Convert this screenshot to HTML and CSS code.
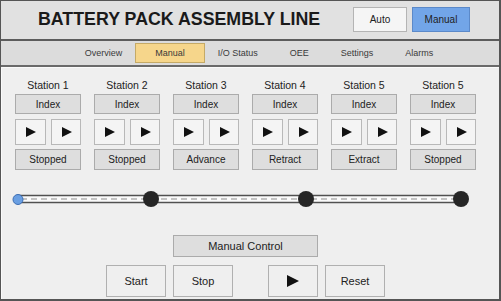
FILE: index.html
```html
<!DOCTYPE html>
<html lang="en">
<head>
    <meta charset="UTF-8">
    <title>Battery Pack Assembly Line</title>
    <link rel="stylesheet" href="styles.css">
</head>
<body>
    <div class="panel">
        <header class="header">
            <h1 class="title">BATTERY PACK ASSEMBLY LINE</h1>
            <div class="mode">
                <button class="mode-btn">Auto</button>
                <button class="mode-btn active">Manual</button>
            </div>
        </header>

        <nav class="tabs">
            <span class="tab">Overview</span>
            <span class="tab active">Manual</span>
            <span class="tab">I/O Status</span>
            <span class="tab">OEE</span>
            <span class="tab">Settings</span>
            <span class="tab">Alarms</span>
        </nav>

        <main class="content">
            <div class="stations">
                <div class="station">
                    <div class="station-name">Station 1</div>
                    <button class="btn index">Index</button>
                    <div class="jog">
                        <button class="btn play"><svg width="10" height="10" viewBox="0 0 10 10"><polygon points="0,0 10,5 0,10" /></svg></button>
                        <button class="btn play"><svg width="10" height="10" viewBox="0 0 10 10"><polygon points="0,0 10,5 0,10" /></svg></button>
                    </div>
                    <button class="btn state">Stopped</button>
                </div>
                <div class="station">
                    <div class="station-name">Station 2</div>
                    <button class="btn index">Index</button>
                    <div class="jog">
                        <button class="btn play"><svg width="10" height="10" viewBox="0 0 10 10"><polygon points="0,0 10,5 0,10" /></svg></button>
                        <button class="btn play"><svg width="10" height="10" viewBox="0 0 10 10"><polygon points="0,0 10,5 0,10" /></svg></button>
                    </div>
                    <button class="btn state">Stopped</button>
                </div>
                <div class="station">
                    <div class="station-name">Station 3</div>
                    <button class="btn index">Index</button>
                    <div class="jog">
                        <button class="btn play"><svg width="10" height="10" viewBox="0 0 10 10"><polygon points="0,0 10,5 0,10" /></svg></button>
                        <button class="btn play"><svg width="10" height="10" viewBox="0 0 10 10"><polygon points="0,0 10,5 0,10" /></svg></button>
                    </div>
                    <button class="btn state">Advance</button>
                </div>
                <div class="station">
                    <div class="station-name">Station 4</div>
                    <button class="btn index">Index</button>
                    <div class="jog">
                        <button class="btn play"><svg width="10" height="10" viewBox="0 0 10 10"><polygon points="0,0 10,5 0,10" /></svg></button>
                        <button class="btn play"><svg width="10" height="10" viewBox="0 0 10 10"><polygon points="0,0 10,5 0,10" /></svg></button>
                    </div>
                    <button class="btn state">Retract</button>
                </div>
                <div class="station">
                    <div class="station-name">Station 5</div>
                    <button class="btn index">Index</button>
                    <div class="jog">
                        <button class="btn play"><svg width="10" height="10" viewBox="0 0 10 10"><polygon points="0,0 10,5 0,10" /></svg></button>
                        <button class="btn play"><svg width="10" height="10" viewBox="0 0 10 10"><polygon points="0,0 10,5 0,10" /></svg></button>
                    </div>
                    <button class="btn state">Extract</button>
                </div>
                <div class="station">
                    <div class="station-name">Station 5</div>
                    <button class="btn index">Index</button>
                    <div class="jog">
                        <button class="btn play"><svg width="10" height="10" viewBox="0 0 10 10"><polygon points="0,0 10,5 0,10" /></svg></button>
                        <button class="btn play"><svg width="10" height="10" viewBox="0 0 10 10"><polygon points="0,0 10,5 0,10" /></svg></button>
                    </div>
                    <button class="btn state">Stopped</button>
                </div>
            </div>

            <!-- conveyor position track -->
            <svg class="track" width="499" height="20" viewBox="0 0 499 20">
                <rect x="17" y="6.5" width="443" height="7" fill="#fafafa" stroke="#505050" stroke-width="1.5" />
                <line x1="20" y1="10" x2="458" y2="10" stroke="#8c8c8c" stroke-width="1" stroke-dasharray="6 4" />
                <circle cx="150" cy="10" r="8" fill="#262626" />
                <circle cx="305" cy="10" r="8" fill="#262626" />
                <circle cx="460" cy="10" r="8" fill="#262626" />
                <circle cx="17" cy="10.5" r="5" fill="#6a9fe2" stroke="#3c6db3" stroke-width="1" />
            </svg>

            <div class="controls">
                <button class="btn manual">Manual Control</button>
                <div class="actions">
                    <button class="btn action">Start</button>
                    <button class="btn action">Stop</button>
                    <button class="btn action run"><svg width="12" height="12" viewBox="0 0 12 12"><polygon points="0,0 12,6 0,12" /></svg></button>
                    <button class="btn action">Reset</button>
                </div>
            </div>
        </main>
    </div>
</body>
</html>
```

FILE: styles.css
```css
* {
    box-sizing: border-box;
}
body {
    margin: 0;
    font-family: "Liberation Sans", Arial, sans-serif;
    color: #222;
}
.panel {
    width: 501px;
    height: 301px;
    display: flex;
    flex-direction: column;
    border: 1px solid #555;
    border-right-width: 2px;
    border-bottom-width: 2px;
    background: #efefef;
}
.header {
    height: 40px;
    display: flex;
    align-items: center;
    padding: 0 29px 1px 37px;
    background: #e1e1e1;
    border-bottom: 2px solid #5c5c5c;
}
.title {
    flex: 1;
    margin: 0;
    font-size: 17.8px;
    font-weight: bold;
    color: #1a1a1a;
}
.mode {
    display: flex;
    gap: 5px;
}
.mode-btn {
    width: 54px;
    height: 25px;
    padding: 0;
    font-family: inherit;
    font-size: 10px;
    color: #222;
    background: #f5f5f5;
    border: 1px solid #b4b4b4;
}
.mode-btn.active {
    width: 58px;
    background: #72a5e8;
    border-color: #5b89c9;
}
.tabs {
    height: 26px;
    display: flex;
    align-items: center;
    justify-content: center;
    padding-left: 18px;
    background: #dcdcdc;
    border-bottom: 2px solid #6a6a6a;
    font-size: 9px;
    color: #3a3a3a;
}
.tab {
    padding: 0 16px;
}
.tab.active {
    height: 20px;
    line-height: 18px;
    padding: 0 19px;
    margin: 0 -3px;
    background: #f6d68b;
    border: 1px solid #c5aa66;
}
.content {
    flex: 1;
    padding-top: 10px;
    box-shadow: inset 1px 1px 0 #fafafa;
}
.stations {
    display: flex;
    gap: 13px;
    padding-left: 14px;
}
.station {
    width: 66px;
    display: flex;
    flex-direction: column;
}
.station-name {
    height: 17px;
    line-height: 16px;
    text-align: center;
    font-size: 10.5px;
}
.btn {
    padding: 0;
    font-family: inherit;
    color: #222;
    background: #dedede;
    border: 1px solid #ababab;
}
.index {
    height: 20px;
    font-size: 10px;
}
.jog {
    display: flex;
    gap: 5px;
    margin: 5px 0 4px;
}
.play {
    flex: 1;
    height: 26px;
    display: flex;
    align-items: center;
    justify-content: center;
    padding-left: 2px;
    background: #f4f4f4;
    border-color: #b8b8b8;
}
.play polygon,
.run polygon {
    fill: #111;
}
.state {
    height: 21px;
    font-size: 10px;
}
.track {
    display: block;
    margin-top: 19px;
}
.controls {
    display: flex;
    flex-direction: column;
    align-items: center;
    margin-top: 26px;
    padding-right: 9px;
}
.manual {
    width: 145px;
    height: 22px;
    font-size: 11px;
}
.actions {
    display: flex;
    gap: 7px;
    margin-top: 8px;
}
.action {
    width: 60px;
    height: 32px;
    font-size: 11px;
    background: #efefef;
    border-color: #b0b0b0;
}
.run {
    width: 50px;
    margin-left: 28px;
    display: flex;
    align-items: center;
    justify-content: center;
}
```
